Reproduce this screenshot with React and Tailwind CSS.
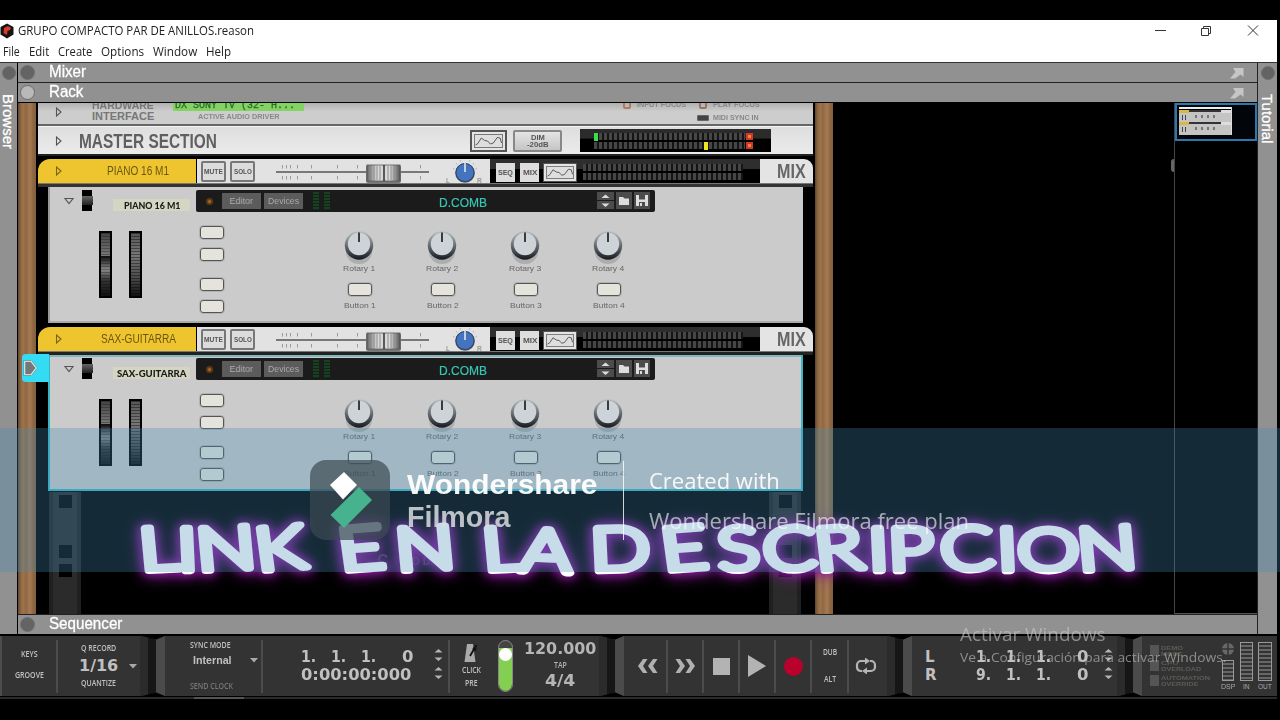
import React, { useLayoutEffect, useRef, useState } from 'react';
import { clsx } from 'clsx';

// Text squeezed or stretched to an exact width
function Fit({ w, className, children }) {
  const ref = useRef(null);
  const [scale, setScale] = useState(1);

  useLayoutEffect(() => {
    if (ref.current) setScale(w / ref.current.offsetWidth);
  }, [w]);

  return (
    <span className="flex shrink-0" style={{ width: w }}>
      <span
        ref={ref}
        className={clsx("block shrink-0 origin-left whitespace-pre leading-none", className)}
        style={{ transform: `scaleX(${scale})` }}
      >
        {children}
      </span>
    </span>
  );
}

const WOOD = "w-[18px] shrink-0 bg-[#a9794f] bg-[linear-gradient(90deg,#5e4430_0,#83603f_2px,#a0734b_5px,#8f6845_8px,#a67a54_12px,#906743_15px,#82603f_18px)]";

function SidePanel({ label, className }) {
  return (
    <div className={clsx("shrink-0 bg-[#919191] flex flex-col items-center", className)}>
      <div className="w-[14px] h-[14px] rounded-full bg-[#636363] border border-[#707070] mt-[3px]" />
      <span className="mt-[14px] text-[15px] leading-[15px] text-white [writing-mode:vertical-rl] [-webkit-text-stroke:0.3px_white]">
        {label}
      </span>
    </div>
  );
}

function SectionBar({ label, w, open, detach = true }) {
  return (
    <div className="h-[19px] shrink-0 bg-[#919191] flex items-center pl-[2px]">
      <div className={clsx("w-[15px] h-[15px] rounded-full border", open ? "bg-[#b9b9b9] border-[#6b6b6b]" : "bg-[#646464] border-[#707070]")} />
      <div className="ml-[14px] flex-1 -mt-[2px]">
        <Fit w={w} className="text-[16px] text-white [-webkit-text-stroke:0.3px_white]">{label}</Fit>
      </div>
      {detach && (
        <svg width="16" height="12" viewBox="0 0 16 12" className="mr-[12px]">
          <path d="M4 1H14.500V10L11.500 7.500L6 11.500H1L6.500 5Z" fill="#c6c6c6" />
        </svg>
      )}
    </div>
  );
}

function Fold({ down, color = "#555" }) {
  return (
    <svg width="10" height="10" viewBox="0 0 10 10" className="shrink-0">
      <path d={down ? "M1 2.500H9L5 7.500Z" : "M2.500 1V9L7 5Z"} fill="none" stroke={color} strokeWidth="1.100" />
    </svg>
  );
}

function WaveButton({ className }) {
  return (
    <div className={clsx("bg-[#e4e4e4] border border-[#555] p-[2px]", className)}>
      <svg width="100%" height="100%" viewBox="0 0 30 14" preserveAspectRatio="none" className="block">
        <rect x="0.500" y="0.500" width="29" height="13" fill="#dedede" stroke="#777" />
        <path d="M1.500 11L4 9.500L7.500 4L11 6.500L14 7L17 10L20 9L24 3.500L27 4L28.500 9" fill="none" stroke="#555" />
      </svg>
    </div>
  );
}

function MeterRow({ className }) {
  return <div className={clsx("bg-[repeating-linear-gradient(90deg,#464646_0_3px,#141414_3px_5px)]", className)} />;
}

function HardwareRow() {
  return (
    <div className="h-[23px] shrink-0 overflow-hidden border-b-2 border-[#666] bg-linear-to-b from-[#b0b0b0] to-[#cdcdcd] to-40% flex">
      <div className="ml-[16px] mt-[4px]"><Fold /></div>
      <div className="ml-[28px] -mt-[3px]">
        <Fit w={62} className="text-[11px] font-bold text-[#777]">HARDWARE</Fit>
        <Fit w={62} className="text-[11px] font-bold text-[#777]">INTERFACE</Fit>
      </div>
      <div className="ml-[19px] -mt-[3px]">
        <div className="w-[131px] h-[11px] bg-[#83d264] pl-[2px]">
          <Fit w={120} className="font-['Liberation_Mono'] text-[11px] text-[#2c6a28] [-webkit-text-stroke:0.3px_#2c6a28]">DX SONY TV (32- H...</Fit>
        </div>
        <div className="ml-[25px] mt-[2px]">
          <Fit w={82} className="text-[8px] font-bold text-[#888]">ACTIVE AUDIO DRIVER</Fit>
        </div>
      </div>
      <div className="ml-[319px] flex flex-col">
        <div className="flex gap-[6px] -mt-[2px]">
          <div className="w-[8px] h-[8px] border-2 border-[#a97d5e] rounded-[2px]" />
          <Fit w={49} className="text-[8px] font-bold text-[#888]">INPUT FOCUS</Fit>
          <div className="w-[8px] h-[8px] border-2 border-[#96765e] rounded-[2px] ml-[7px]" />
          <Fit w={47} className="text-[8px] font-bold text-[#888]">PLAY FOCUS</Fit>
        </div>
        <div className="flex items-center ml-[74px] mt-[5px] gap-[4px]">
          <div className="w-[12px] h-[6px] bg-[#444] border border-[#666] rounded-[1px]" />
          <Fit w={46} className="text-[8px] font-bold text-[#888]">MIDI SYNC IN</Fit>
        </div>
      </div>
    </div>
  );
}

function MasterRow() {
  return (
    <div className="h-[30px] shrink-0 border-t border-t-[#f3f3f3] bg-linear-to-b from-[#dedede] to-[#ebebeb] flex items-center border-b-2 border-b-[#222]">
      <div className="ml-[16px]"><Fold /></div>
      <div className="ml-[15px]">
        <Fit w={138} className="text-[20px] font-bold text-[#606060]">MASTER SECTION</Fit>
      </div>
      <WaveButton className="ml-[253px] w-[37px] h-[22px] border-2" />
      <div className="ml-[6px] w-[49px] h-[22px] bg-linear-to-b from-[#e4e4e4] to-[#c5c5c5] border-2 border-[#888] rounded-[2px] flex flex-col items-center justify-center">
        <Fit w={14} className="text-[7px] font-bold text-[#555]">DIM</Fit>
        <Fit w={21} className="text-[7px] font-bold text-[#555]">-20dB</Fit>
      </div>
      <div className="ml-[18px] w-[191px] h-[23px] bg-black bg-linear-to-b from-[#2b2b2b] from-40% to-black to-45% relative pl-[14px] pt-[4px]">
        <MeterRow className="w-[151px] h-[7px]" />
        <MeterRow className="w-[151px] h-[7px] mt-[2px]" />
        <div className="absolute left-[14px] top-[4px] w-[4px] h-[8px] bg-[#35e04a]" />
        <div className="absolute left-[124px] top-[13px] w-[4px] h-[8px] bg-[#efe623]" />
        <div className="absolute left-[166px] top-[4px] w-[7px] h-[7px] bg-[#ff7a50] border-2 border-[#cc3a20]" />
        <div className="absolute left-[166px] top-[13px] w-[7px] h-[7px] bg-[#ff7a50] border-2 border-[#cc3a20]" />
      </div>
    </div>
  );
}

function FaderPan() {
  const ticks = [28, 32, 36, 43, 57, 83, 103, 130, 142, 166];
  return (
    <svg width="234" height="25" viewBox="1 0 234 25" className="shrink-0">
      {ticks.map((x) => (
        <path key={x} d={`M${x + 0.5} 6V9.500M${x + 0.5} 17V20.500`} stroke="#9a9a9a" strokeWidth="1" />
      ))}
      <path d="M22 13H175" stroke="#555" strokeWidth="1.600" />
      <rect x="112" y="6" width="35" height="18" rx="2" fill="#777" />
      <rect x="113" y="6" width="33" height="16" fill="url(#cap)" stroke="#555" strokeWidth="0.800" />
      {[117, 120, 123, 126, 134, 137, 140].map((x) => (
        <path key={x} d={`M${x} 7V21`} stroke="#888" strokeWidth="0.900" />
      ))}
      <path d="M130 6V22" stroke="#222" strokeWidth="1.400" />
      <defs>
        <linearGradient id="cap">
          <stop offset="0" stopColor="#666" /><stop offset="0.300" stopColor="#d8d8d8" />
          <stop offset="0.700" stopColor="#d8d8d8" /><stop offset="1" stopColor="#555" />
        </linearGradient>
      </defs>
      <circle cx="211" cy="14" r="9.800" fill="#555" />
      <circle cx="211" cy="13.500" r="9" fill="#4473c0" stroke="#2a4673" />
      <path d="M211 4V13" stroke="#eee" strokeWidth="1.500" />
      <path d="M202 4L203 5.500M220 4L219 5.500M199 9L200.500 10M223 9L221.500 10M206 1L206.500 2.500M216 1L215.500 2.500" stroke="#999" strokeWidth="0.700" />
      <text x="192" y="24" fontSize="6.500" fill="#777">L</text>
      <text x="223" y="24" fontSize="6.500" fill="#777">R</text>
    </svg>
  );
}

function MixRow({ name, w }) {
  return (
    <div className="h-[25px] shrink-0 flex border-b border-[#777]">
      <div className="w-[158px] bg-[#efc52f] rounded-tl-[12px] flex items-center">
        <div className="ml-[16px] w-[11px] shrink-0"><Fold color="#7a6416" /></div>
        <div className="w-[131px] pl-[15px] shrink-0 flex justify-center">
          <Fit w={w} className="text-[12px] text-[#695614]">{name}</Fit>
        </div>
      </div>
      <div className="w-[293px] ml-px bg-[#e2e2e2] flex">
        <div className="ml-[4px] mt-[2px] w-[25px] h-[21px] border-2 border-[#777] rounded-[2px] bg-[#dcdcdc] flex items-center justify-center">
          <Fit w={19} className="text-[7px] font-bold text-[#555]">MUTE</Fit>
        </div>
        <div className="ml-[4px] mt-[2px] w-[25px] h-[21px] border-2 border-[#777] rounded-[2px] bg-[#dcdcdc] flex items-center justify-center">
          <Fit w={18} className="text-[7px] font-bold text-[#555]">SOLO</Fit>
        </div>
        <FaderPan />
      </div>
      <div className="w-[270px] bg-black bg-linear-to-b from-[#2e2e2e] from-40% to-black to-45% flex pt-[4px]">
        <div className="ml-[6px] w-[19px] h-[19px] bg-[#ddd] flex items-center justify-center">
          <Fit w={15} className="text-[7px] font-bold text-[#555]">SEQ</Fit>
        </div>
        <div className="ml-[5px] w-[19px] h-[19px] bg-[#ddd] flex items-center justify-center">
          <Fit w={14} className="text-[7px] font-bold text-[#555]">MIX</Fit>
        </div>
        <WaveButton className="ml-[4px] w-[34px] h-[19px]" />
        <div className="ml-[6px]">
          <MeterRow className="w-[160px] h-[7px] mt-px" />
          <MeterRow className="w-[160px] h-[7px] mt-[2px]" />
        </div>
      </div>
      <div className="w-[53px] bg-[#e4e4e4] rounded-tr-[9px] flex items-center justify-end pr-[7px]">
        <Fit w={29} className="text-[20px] font-bold text-[#666]">MIX</Fit>
      </div>
    </div>
  );
}

function Pad({ className }) {
  return <div className={clsx("w-[24px] h-[13px] rounded-[3px] border border-[#555] outline outline-[#999]/50 bg-[#e4e4dc]", className)} />;
}

function Knob() {
  return (
    <svg width="32" height="36" viewBox="0 0 32 36" className="block">
      <ellipse cx="16" cy="22" rx="13" ry="12" fill="#999" opacity="0.600" />
      <defs>
        <linearGradient id="rim" x1="0" y1="0" x2="0" y2="1">
          <stop offset="0" stopColor="#b8c0c2" /><stop offset="0.500" stopColor="#666e74" /><stop offset="1" stopColor="#161a20" />
        </linearGradient>
      </defs>
      <circle cx="16" cy="15.500" r="14.200" fill="url(#rim)" />
      <circle cx="16" cy="14" r="11.200" fill="#cdd3d6" />
      <path d="M16 2.500V12" stroke="#222" strokeWidth="1.700" />
    </svg>
  );
}

function Wheel({ center }) {
  return (
    <div className="w-[13px] h-[67px] bg-black p-[2px]">
      <div className={clsx(
        "h-full",
        center
          ? "bg-[repeating-linear-gradient(180deg,#0004_0_1px,#0000_1px_3px),linear-gradient(#444,#777_36%,#111_37%,#888_58%,#333_75%,#111)]"
          : "bg-[repeating-linear-gradient(180deg,#0006_0_1px,#0000_1px_3px),linear-gradient(#555,#777_35%,#4c4c4c_70%,#111)]"
      )} />
    </div>
  );
}

function Combinator({ name, w, selected }) {
  return (
    <div className={clsx("ml-[10px] w-[755px] h-[136px] shrink-0 relative bg-[#cbcbcb] border-l-2", selected ? "border-[#39b5c6] shadow-[inset_-2px_0_0_#39b5c6,inset_0_2px_0_#7fb5bb,inset_0_-2px_0_#39b5c6]" : "border-l-[#999] border-b-2 border-b-[#aaa]")}>
      {selected && (
        <div className="absolute -left-[28px] -top-px w-[27px] h-[28px] bg-[#34dcf3] rounded-l-[4px] flex items-center pl-[1px]">
          <svg width="15" height="16" viewBox="0 0 15 16">
            <path d="M1.500 1H8L13.500 8L8 15H1.500Z" fill="#777" stroke="#d8f3f5" strokeWidth="1.500" />
            <path d="M0.700 0.500H8.400L14.300 8L8.400 15.500H0.700Z" fill="none" stroke="#467a80" strokeWidth="0.600" />
          </svg>
        </div>
      )}
      <div className="flex h-[27px] pt-[3px]">
        <div className="ml-[14px] mt-[6px]"><Fold down /></div>
        <div className="ml-[8px] w-[10px] h-[21px] bg-black py-[6px]"><div className="h-[9px] w-[11px] bg-linear-to-b from-[#666] to-[#222]" /></div>
        <div className="ml-[21px] mt-[9px] w-[77px] h-[12px] bg-[#d4d6c2] flex items-center justify-center">
          <Fit w={w} className="text-[9px] font-black text-[#1a1a1a] font-['Lato']">{name}</Fit>
        </div>
        <div className="ml-[6px] w-[459px] h-[22px] bg-[#1b1b1b] rounded-[2px] flex items-center text-[#aaa]">
          <div className="ml-[10px] w-[7px] h-[7px] rounded-full bg-[#b06a20] border-2 border-[#5e3b14]" />
          <div className="ml-[9px] w-[39px] h-[16px] bg-[#5c5c5c] flex items-center justify-center"><Fit w={24} className="text-[9px]">Editor</Fit></div>
          <div className="ml-[3px] w-[39px] h-[16px] bg-[#5c5c5c] flex items-center justify-center"><Fit w={31} className="text-[9px]">Devices</Fit></div>
          <div className="ml-[10px] w-[6px] h-[18px] bg-[repeating-linear-gradient(180deg,#17411f_0_2px,#152218_2px_3px)]" />
          <div className="ml-[5px] w-[6px] h-[18px] bg-[repeating-linear-gradient(180deg,#17411f_0_2px,#152218_2px_3px)]" />
          <div className="ml-[109px] mt-[4px]"><Fit w={48} className="text-[12.500px] text-[#36c7b4] [-webkit-text-stroke:0.2px_#36c7b4]">D.COMB</Fit></div>
          <svg width="54" height="17" viewBox="0 0 54 17" className="ml-[110px] -mt-px">
            <rect x="0" y="0" width="17" height="8" fill="#4c4c4c" /><rect x="0" y="9" width="17" height="8" fill="#4c4c4c" />
            <path d="M4.500 6H12.500L8.500 2.500ZM4.500 11.500H12.500L8.500 15Z" fill="#ddd" />
            <rect x="19" y="0" width="16" height="17" fill="#4c4c4c" />
            <path d="M22 5H26L27.500 6.500H32V13H22Z" fill="#ddd" />
            <rect x="37" y="0" width="16" height="17" fill="#4c4c4c" />
            <path d="M39 3H51V14H39ZM42 3V7.500H48V3ZM42 10V14H48V10Z" fill="#ddd" fillRule="evenodd" />
            <rect x="43" y="11" width="2" height="3" fill="#ddd" />
          </svg>
        </div>
      </div>
      <div className="flex">
        <div className="ml-[49px] mt-[17px] flex gap-[17px]">
          <Wheel center />
          <Wheel />
        </div>
        <div className="ml-[58px] mt-[12px]">
          <Pad />
          <Pad className="mt-[9px]" />
          <Pad className="mt-[17px]" />
          <Pad className="mt-[9px]" />
        </div>
        <div className="ml-[93px] mt-[16px] flex">
          {[1, 2, 3, 4].map((n) => (
            <div key={n} className="w-[83px] flex flex-col items-center">
              <Knob />
              <div className="-mt-px"><Fit w={32} className="text-[8px] text-[#666]">Rotary {n}</Fit></div>
              <Pad className="mt-[10px] ml-[3px]" />
              <div className="mt-[6px] ml-[3px]"><Fit w={32} className="text-[8px] text-[#666]">Button {n}</Fit></div>
            </div>
          ))}
        </div>
      </div>
    </div>
  );
}

function Rail() {
  return (
    <div className="w-[32px] bg-[#2b2b2b] border-x-4 border-[#202020] pl-[6px]">
      <div className="w-[13px] h-[13px] bg-black mt-[3px]" />
      <div className="w-[13px] h-[13px] bg-black mt-[37px]" />
      <div className="w-[13px] h-[13px] bg-black mt-[6px]" />
    </div>
  );
}

function Rack() {
  return (
    <div className="flex-1 min-h-0 flex bg-black overflow-hidden">
      <div className={WOOD} />
      <div className="w-[775px] ml-[2px] flex flex-col shrink-0">
        <HardwareRow />
        <MasterRow />
        <div className="h-[3px] shrink-0" />
        <MixRow name="PIANO 16 M1" w={62} />
        <div className="h-[3px] shrink-0 bg-[#333]" />
        <Combinator name="PIANO 16 M1" w={56} />
        <div className="h-[4px] shrink-0" />
        <MixRow name="SAX-GUITARRA" w={75} />
        <div className="h-[3px] shrink-0 bg-[#222]" />
        <Combinator name="SAX-GUITARRA" w={69} selected />
        <div className="flex-1 flex ml-[11px] w-[752px] pt-[1px]">
          <Rail />
          <div className="flex-1 flex pl-[296px] pt-[60px] gap-[24px] text-[#3b3b42]">
            <Fit w={11} className="text-[17px] font-bold">C</Fit>
            <div className="pt-[5px]"><Fit w={28} className="text-[10px] font-bold">D D...</Fit></div>
          </div>
          <Rail />
        </div>
      </div>
      <div className={clsx(WOOD, "ml-[2px]")} />
      <div className="flex-1 border-r border-[#444] flex justify-end">
        <div className="w-[3px] h-[13px] mt-[56px] rounded-l-full bg-[#666]" />
      </div>
      <div className="w-[82px] shrink-0 border-b border-[#555]">
        <div className="h-[38px] border-2 border-[#2f78ad] bg-[#02060a] p-[2px] pb-0">
          <div className="w-[53px] h-[28px] bg-[#c4c4c4] flex flex-col border-r border-[#ddd]">
            <div className="h-[3px] bg-[#eee] border-b border-black w-full" />
            {[0, 1].map((i) => (
              <div key={i} className="h-[12px]">
                <div className="flex h-[3px]"><div className="w-[10px] bg-[#d9b945]" /><div className="w-[32px] h-[2px] bg-[#333]" /><div className="flex-1 bg-[#ddd]" /></div>
                <div className="flex pl-[3px] pt-[2px] gap-[2px]">
                  <div className="w-px h-[5px] bg-[#444]" /><div className="w-px h-[5px] bg-[#444] mr-[7px]" />
                  <div className="w-[2px] h-[3px] bg-[#777] mr-[2px]" /><div className="w-[2px] h-[3px] bg-[#777] mr-[2px]" />
                  <div className="w-[2px] h-[3px] bg-[#777] mr-[2px]" /><div className="w-[2px] h-[3px] bg-[#777]" />
                </div>
              </div>
            ))}
          </div>
        </div>
      </div>
    </div>
  );
}

function Bevel() {
  return (
    <svg width="25" height="60" viewBox="0 0 25 60" className="shrink-0">
      <rect width="17" height="60" fill="#2b2b2b" />
      <path d="M8 0L17 5V55L8 60Z" fill="#161616" />
      <path d="M2 0H25L16 3.500ZM2 60H25L16 56.500Z" fill="#000" />
      <path d="M16 4L25 0V60L16 56Z" fill="#4b4b4b" />
    </svg>
  );
}

function Divider() {
  return <div className="w-[2px] h-[53px] mt-[4px] bg-[#4c4c4c] shrink-0" />;
}

function Spin() {
  return (
    <svg width="9" height="14" viewBox="0 0 9 14">
      <path d="M0.500 4.500L4.500 1L8.500 4.500ZM0.500 9.500L4.500 13L8.500 9.500Z" fill="#b5b5b5" />
    </svg>
  );
}

function Position({ bar }) {
  return (
    <div className="flex">
      <Fit w={15} className="text-[15px] font-bold font-['DejaVu_Sans']">{bar}.</Fit>
      <div className="ml-[15px]"><Fit w={15} className="text-[15px] font-bold font-['DejaVu_Sans']">1.</Fit></div>
      <div className="ml-[15px]"><Fit w={15} className="text-[15px] font-bold font-['DejaVu_Sans']">1.</Fit></div>
      <div className="ml-[26px]"><Fit w={11} className="text-[15px] font-bold font-['DejaVu_Sans']">0</Fit></div>
    </div>
  );
}

function Transport() {
  return (
    <div className="mt-px w-[1277px] h-[60px] shrink-0 bg-[#333] flex text-[#c0c0c0] font-['Open_Sans']">
      <div className="w-[56px] border-l-2 border-[#4c4c4c] flex flex-col items-center pt-[14px]">
        <Fit w={17} className="text-[8px] font-semibold">KEYS</Fit>
        <div className="mt-[13px]"><Fit w={29} className="text-[8px] font-semibold">GROOVE</Fit></div>
      </div>
      <Divider />
      <div className="w-[82px] pl-[21px] pt-[8px]">
        <div className="pl-[2px]"><Fit w={35} className="text-[8px] font-semibold">Q RECORD</Fit></div>
        <div className="flex mt-[6px] items-center gap-[11px]">
          <Fit w={39} className="text-[16px] font-bold font-['DejaVu_Sans']">1/16</Fit>
          <svg width="8" height="5" viewBox="0 0 8 5"><path d="M0 0H8L4 4.500Z" fill="#aaa" /></svg>
        </div>
        <div className="pl-[2px] mt-[5px]"><Fit w={35} className="text-[8px] font-semibold">QUANTIZE</Fit></div>
      </div>
      <Bevel />
      <div className="w-[96px] pl-[25px] pt-[5px]">
        <Fit w={41} className="text-[8px] font-semibold">SYNC MODE</Fit>
        <div className="flex mt-[6px] pl-[3px] items-center gap-[18px]">
          <Fit w={39} className="text-[11.500px] font-bold font-['Liberation_Sans']">Internal</Fit>
          <svg width="8" height="5" viewBox="0 0 8 5" className="shrink-0"><path d="M0 0H8L4 4.500Z" fill="#aaa" /></svg>
        </div>
        <div className="mt-[15px]"><Fit w={43} className="text-[8px] font-semibold text-[#777]">SEND CLOCK</Fit></div>
      </div>
      <Divider />
      <div className="pl-[38px] pt-[14px] w-[171px]">
        <Position bar="1" />
        <div className="mt-[3px]"><Fit w={111} className="text-[15px] font-bold font-['DejaVu_Sans']">0:00:00:000</Fit></div>
      </div>
      <div className="w-[14px] pt-[12px] flex flex-col gap-[4px]">
        <Spin /><Spin />
      </div>
      <Divider />
      <div className="w-[42px] pt-[7px] flex flex-col items-center">
        <svg width="16" height="19" viewBox="0 0 16 19" className="shrink-0">
          <path d="M4 1H10L12.500 19H1.500Z" fill="#aaa" />
          <path d="M7 13L13.500 2" stroke="#111" strokeWidth="1.800" />
          <circle cx="11.500" cy="6" r="2" fill="#111" />
        </svg>
        <div className="mt-[4px]"><Fit w={19} className="text-[8px] font-semibold">CLICK</Fit></div>
        <div className="mt-[5px]"><Fit w={13} className="text-[8px] font-semibold">PRE</Fit></div>
      </div>
      <div className="mt-[4px] ml-[6px] w-[15px] h-[52px] shrink-0 rounded-full border border-[#888] bg-[#444] flex flex-col justify-end overflow-hidden">
        <div className="h-[43px] bg-[#84cf52] rounded-b-full">
          <div className="w-[13px] h-[13px] rounded-full bg-white" />
        </div>
      </div>
      <div className="w-[86px] pt-[6px] pl-[8px] flex flex-col items-center text-[#b5b5b5]">
        <Fit w={72} className="text-[15px] font-bold font-['DejaVu_Sans']">120.000</Fit>
        <div className="mt-[4px]"><Fit w={13} className="text-[8px] font-semibold">TAP</Fit></div>
        <div className="mt-[5px]"><Fit w={30} className="text-[15px] font-bold font-['DejaVu_Sans']">4/4</Fit></div>
      </div>
      <Bevel />
      <div className="w-[42px] flex items-center justify-end pr-[8px]">
        <svg width="20" height="14" viewBox="0 0 20 14"><path d="M0 7L5 0H9.500L5 7L9.500 14H5ZM10 7L15 0H19.500L15 7L19.500 14H15Z" fill="#b0b0b0" /></svg>
      </div>
      <Divider />
      <div className="w-[34px] flex items-center justify-center">
        <svg width="20" height="14" viewBox="0 0 20 14"><path d="M10 7L5 0H0.500L5 7L0.500 14H5ZM20 7L15 0H10.500L15 7L10.500 14H15Z" fill="#b0b0b0" /></svg>
      </div>
      <Divider />
      <div className="w-[34px] flex items-center justify-center"><div className="w-[17px] h-[17px] bg-[#b3b3b3]" /></div>
      <Divider />
      <div className="w-[34px] flex items-center justify-center">
        <svg width="18" height="22" viewBox="0 0 18 22"><path d="M0 0L18 11L0 22Z" fill="#b3b3b3" /></svg>
      </div>
      <Divider />
      <div className="w-[34px] flex items-center justify-center"><div className="w-[19px] h-[19px] rounded-full bg-[#b8022c]" /></div>
      <Divider />
      <div className="w-[35px] pt-[12px] flex flex-col items-center">
        <Fit w={14} className="text-[8px] font-semibold">DUB</Fit>
        <div className="mt-[19px]"><Fit w={12} className="text-[8px] font-semibold">ALT</Fit></div>
      </div>
      <Divider />
      <div className="w-[38px] flex items-center justify-center pr-[4px]">
        <svg width="22" height="16" viewBox="0 0 22 16" fill="none" stroke="#b5b5b5" strokeWidth="2.200" className="shrink-0">
          <path d="M7 13H5.500A4 4 0 0 1 2 9V7A4 4 0 0 1 6 3H11" />
          <path d="M15 3H16A4 4 0 0 1 20 7V9A4 4 0 0 1 16 13H11" />
          <path d="M10 -0.500L15 3L10 6.500ZM12 9.500L7 13L12 16.500Z" fill="#b5b5b5" stroke="none" />
        </svg>
      </div>
      <Bevel />
      <div className="pt-[14px] pl-[13px] w-[64px]">
        <Fit w={10} className="text-[15px] font-bold font-['DejaVu_Sans']">L</Fit>
        <div className="mt-[3px]"><Fit w={12} className="text-[15px] font-bold font-['DejaVu_Sans']">R</Fit></div>
      </div>
      <div className="pt-[14px] w-[128px] shrink-0">
        <Position bar="1" />
        <div className="mt-[3px]"><Position bar="9" /></div>
      </div>
      <div className="pt-[12px] flex flex-col gap-[4px] w-[13px]"><Spin /><Spin /></div>
      <Bevel />
      <div className="flex-1 flex pt-[6px] text-[#5c5c56] font-['Liberation_Sans']">
        <div className="ml-[8px] pt-[3px] flex flex-col gap-[3px] w-[62px]">
          {[["DEMO", "MODE"], ["CPU", "OVERLOAD"], ["AUTOMATION", "OVERRIDE"]].map(([a, b], i) => (
            <div key={a} className="flex gap-[2px]">
              <div className="w-[9px] h-[11px] bg-[#555]" />
              <div>
                <Fit w={[22, 18, 49][i]} className="text-[6px] font-bold">{a}</Fit>
                <Fit w={[22, 40, 37][i]} className="text-[6px] font-bold">{b}</Fit>
              </div>
            </div>
          ))}
        </div>
        <div className="flex flex-col items-center w-[14px] ml-[9px]">
          <svg width="14" height="14" viewBox="0 0 14 14">
            <circle cx="7" cy="7" r="6" fill="#686868" />
            <path d="M7 0V14M0 7H14" stroke="#333" strokeWidth="1.500" />
          </svg>
          <div className="mt-[4px] w-[12px] h-[21px] border border-[#999] bg-[repeating-linear-gradient(180deg,#333_0_2px,#666_2px_4px)]" />
          <div className="mt-[3px]"><Fit w={14} className="text-[6.500px] text-[#aaa]">DSP</Fit></div>
        </div>
        <div className="flex flex-col items-center ml-[5px]">
          <div className="w-[13px] h-[39px] border border-[#999] bg-[repeating-linear-gradient(180deg,#333_0_2px,#666_2px_4px)]" />
          <div className="mt-[3px]"><Fit w={7} className="text-[6.500px] text-[#aaa]">IN</Fit></div>
        </div>
        <div className="flex flex-col items-center ml-[5px]">
          <div className="w-[14px] h-[39px] border border-[#999] bg-[repeating-linear-gradient(180deg,#333_0_2px,#666_2px_4px)]" />
          <div className="mt-[3px]"><Fit w={14} className="text-[6.500px] text-[#aaa]">OUT</Fit></div>
        </div>
      </div>
    </div>
  );
}

const BANNER = [
  { word: "LINK", xs: [141, 178, 198, 258], rot: [-4, -2, -4, -6] },
  { word: "EN", xs: [341, 397], rot: [-6, -4] },
  { word: "LA", xs: [484, 519], rot: [-4, 3] },
  { word: "DESCRIPCION", xs: [591, 664, 719, 764, 817, 869, 889, 942, 998, 1017, 1079], rot: [-2, -6, -4, -3, -5, -2, -2, -4, -2, 0, -4] },
];

function Banner() {
  return (
    <svg width="1280" height="120" viewBox="0 490 1280 120" className="absolute left-0 top-[490px] overflow-visible drop-shadow-[0_1px_7px_#8c1a9e]">
      <g
        transform="scale(1.32 1)"
        fill="#fff" stroke="#fff" strokeWidth="7" strokeLinejoin="round" strokeLinecap="round"
        className="font-['Lato'] font-light text-[60px] drop-shadow-[0_0_4px_#8b1c9f]"
      >
        {BANNER.map(({ word, xs, rot }) => (
          <text key={word} y="571" x={xs.map((x) => x / 1.32).join(" ")} rotate={rot.join(" ")}>{word}</text>
        ))}
      </g>
    </svg>
  );
}

function Filmora() {
  return (
    <div className="absolute left-[310px] top-[460px] flex">
      <div className="w-[80px] h-[80px] rounded-[16px] bg-[#3c4a52]/70">
        <svg width="80" height="80" viewBox="0 0 80 80">
          <path d="M34 12L47 25L33 39.500L20 25Z" fill="#fff" />
          <path d="M49 27L62 40L34 68L20.500 55Z" fill="#46b28e" />
        </svg>
      </div>
      <div className="ml-[17px] pt-[11px]">
        <Fit w={190} className="text-[28px] font-bold text-white/95">Wondershare</Fit>
        <div className="mt-[3px]"><Fit w={103} className="text-[30px] font-bold text-[#d9dcdf]/85">Filmora</Fit></div>
      </div>
      <div className="mt-px w-px h-[79px] ml-[26px] bg-white/80" />
      <div className="ml-[25px] pt-[11px] font-['Open_Sans'] text-white/90">
        <Fit w={131} className="text-[21px]">Created with</Fit>
        <div className="mt-[19px]"><Fit w={320} className="text-[21px] text-white/60">Wondershare Filmora free plan</Fit></div>
      </div>
    </div>
  );
}

export default function App() {
  const menu = [["File", 17, "ml-[3px]"], ["Edit", 20, "ml-[9px]"], ["Create", 34, "ml-[9px]"], ["Options", 43, "ml-[9px]"], ["Window", 44, "ml-[9px]"], ["Help", 25, "ml-[9px]"]];

  return (
    <div className="relative w-[1280px] h-[720px] bg-black overflow-hidden flex flex-col pt-[20px] font-['Liberation_Sans',sans-serif]">
      {/* Window title and menu */}
      <div className="w-[1277px] h-[42px] shrink-0 bg-white text-[#222] font-['Open_Sans']">
        <div className="h-[22px] flex items-center">
          <svg width="14" height="16" viewBox="0 0 14 16">
            <path d="M7 0.500L13.500 4V11.500L7 15.500L0.500 11.500V4Z" fill="#151515" />
            <path d="M4 5L8 3L11 5L10 7L7.500 8L7 12L3.500 10Z" fill="#dc3b2c" />
          </svg>
          <div className="ml-[4px] flex-1"><Fit w={236} className="text-[12.500px]">GRUPO COMPACTO PAR DE ANILLOS.reason</Fit></div>
          <svg width="108" height="14" viewBox="0 0 108 14" className="mr-[14px]" fill="none" stroke="#333" strokeWidth="1">
            <path d="M0 6.500H11" />
            <path d="M46.500 4.500H53.500V11.500H46.500ZM48.500 4.500V2.500H55.500V9.500H53.500" />
            <path d="M93 1.500L103 11.500M103 1.500L93 11.500" />
          </svg>
        </div>
        <div className="h-[20px] flex items-center">
          {menu.map(([label, w, gap]) => (
            <div key={label} className={gap}><Fit w={w} className="text-[12.500px]">{label}</Fit></div>
          ))}
        </div>
      </div>

      {/* Workspace */}
      <div className="w-[1277px] h-[572px] shrink-0 border-t border-[#333] flex">
        <SidePanel label="Browser" className="w-[17px]" />
        <div className="w-px bg-black shrink-0" />
        <div className="flex-1 min-w-0 flex flex-col">
          <SectionBar label="Mixer" w={37} />
          <div className="h-px bg-[#222] shrink-0" />
          <SectionBar label="Rack" w={34} open />
          <div className="h-px bg-black shrink-0" />
          <Rack />
          <div className="h-px bg-[#222] shrink-0" />
          <SectionBar label="Sequencer" w={73} detach={false} />
        </div>
        <div className="w-px bg-[#222] shrink-0" />
        <SidePanel label="Tutorial" className="w-[19px]" />
      </div>

      <div className="h-px bg-black shrink-0" />
      <Transport />
      <div className="mt-[1px] h-[2px] w-[1277px] bg-[#2b2b2b] shrink-0 pl-[194px]"><div className="w-[50px] h-[2px] bg-[#555]" /></div>

      {/* Video overlays */}
      <Banner />
      <div className="absolute left-0 top-[428px] w-full h-[144px] bg-[#438fb7]/30" />
      <Filmora />
      <div className="absolute left-[960px] top-[625px] font-['Open_Sans'] text-[#c8c8c8]/60">
        <Fit w={146} className="text-[18px]">Activar Windows</Fit>
        <div className="mt-[8px]"><Fit w={267} className="text-[13px]">Ve a Configuración para activar Windows.</Fit></div>
      </div>
    </div>
  );
}
